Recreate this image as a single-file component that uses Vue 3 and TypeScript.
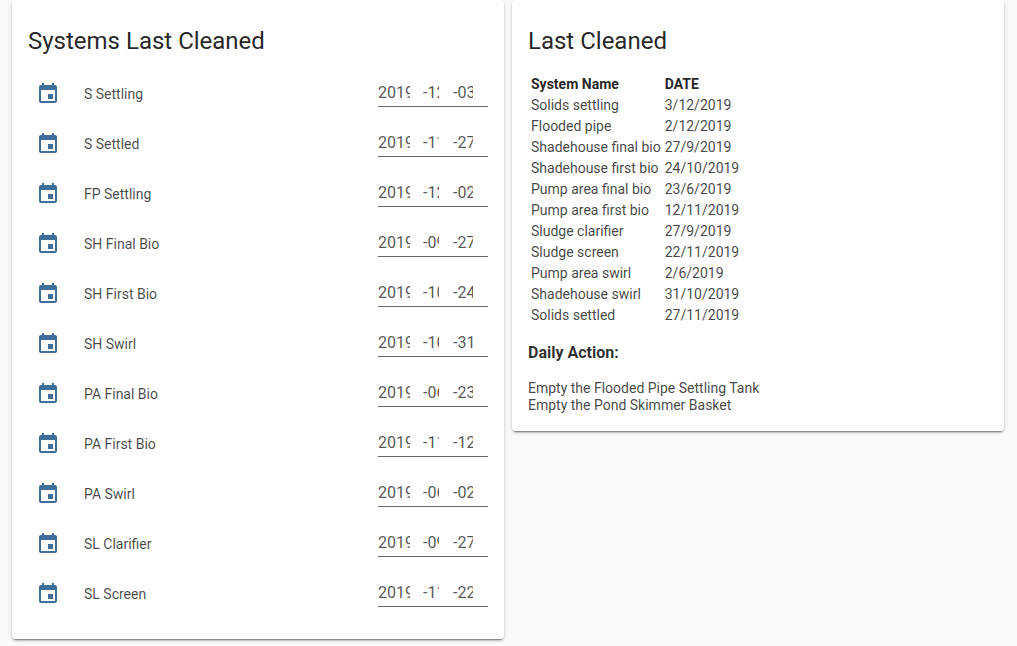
<script setup lang="ts">
const systems = [
  { name: 'S Settling', month: '-12', day: '-03' },
  { name: 'S Settled', month: '-11', day: '-27' },
  { name: 'FP Settling', month: '-12', day: '-02' },
  { name: 'SH Final Bio', month: '-09', day: '-27' },
  { name: 'SH First Bio', month: '-10', day: '-24' },
  { name: 'SH Swirl', month: '-10', day: '-31' },
  { name: 'PA Final Bio', month: '-06', day: '-23' },
  { name: 'PA First Bio', month: '-11', day: '-12' },
  { name: 'PA Swirl', month: '-06', day: '-02' },
  { name: 'SL Clarifier', month: '-09', day: '-27' },
  { name: 'SL Screen', month: '-11', day: '-22' },
]
const cleaned = [
  ['Solids settling', '3/12/2019'],
  ['Flooded pipe', '2/12/2019'],
  ['Shadehouse final bio', '27/9/2019'],
  ['Shadehouse first bio', '24/10/2019'],
  ['Pump area final bio', '23/6/2019'],
  ['Pump area first bio', '12/11/2019'],
  ['Sludge clarifier', '27/9/2019'],
  ['Sludge screen', '22/11/2019'],
  ['Pump area swirl', '2/6/2019'],
  ['Shadehouse swirl', '31/10/2019'],
  ['Solids settled', '27/11/2019'],
]
</script>

<template>
  <div class="page">
    <section class="card left">
      <h2 class="title">Systems Last Cleaned</h2>
      <div class="rows">
        <div v-for="s in systems" :key="s.name" class="row">
          <svg class="icon" viewBox="0 0 24 24" width="24" height="24">
            <path d="M17 12h-5v5h5v-5zM16 1v2H8V1H6v2H5c-1.11 0-1.99.9-1.99 2L3 19c0 1.1.89 2 2 2h14c1.1 0 2-.9 2-2V5c0-1.1-.9-2-2-2h-1V1h-2zm3 18H5V8h14v11z" />
          </svg>
          <span class="name">{{ s.name }}</span>
          <div class="date">
            <span class="seg year">2019</span>
            <span class="seg month">{{ s.month }}</span>
            <span class="seg day">{{ s.day }}</span>
          </div>
        </div>
      </div>
    </section>
    <section class="card right">
      <h2 class="title">Last Cleaned</h2>
      <table class="table">
        <thead>
          <tr><th>System Name</th><th>DATE</th></tr>
        </thead>
        <tbody>
          <tr v-for="c in cleaned" :key="c[0]">
            <td>{{ c[0] }}</td>
            <td>{{ c[1] }}</td>
          </tr>
        </tbody>
      </table>
      <h3 class="daily">Daily Action:</h3>
      <p class="actions">Empty the Flooded Pipe Settling Tank<br />Empty the Pond Skimmer Basket</p>
    </section>
  </div>
</template>

<style>
html, body { margin: 0; background: #fafafa; }
</style>

<style scoped>
.page {
  display: flex;
  align-items: flex-start;
  gap: 8px;
  padding: 0 13px 7px 12px;
  height: 646px;
  box-sizing: border-box;
  overflow: hidden;
  font-family: Roboto, sans-serif;
  color: rgba(0, 0, 0, 0.87);
}
.card {
  width: 492px;
  box-sizing: border-box;
  background: #fff;
  border-radius: 4px;
  padding: 16px;
  box-shadow: 0 3px 1px -2px rgba(0, 0, 0, 0.32), 0 2px 2px 0 rgba(0, 0, 0, 0.18), 0 1px 5px 0 rgba(0, 0, 0, 0.12);
}
.left { height: 639px; }
.right { height: 431px; }
.title {
  margin: 9px 0 0;
  font-size: 24px;
  font-weight: 400;
  line-height: 32px;
}
.rows { margin-top: 12px; }
.row {
  display: flex;
  align-items: center;
  height: 50px;
  font-size: 14px;
}
.icon {
  fill: #3f6e9a;
  margin-left: 8px;
  flex: none;
}
.name {
  margin-left: 24px;
  color: rgba(0, 0, 0, 0.72);
}
.date {
  margin-left: auto;
  width: 110px;
  height: 26px;
  box-sizing: border-box;
  border-bottom: 1px solid rgba(0, 0, 0, 0.6);
  display: flex;
  font-size: 16px;
  line-height: 24px;
  color: rgba(0, 0, 0, 0.68);
}
.seg {
  display: block;
  overflow: hidden;
  white-space: nowrap;
  flex: none;
}
.year { width: 32px; }
.month { width: 16px; margin-left: 13px; }
.day { width: 20px; margin-left: 14px; }
.table {
  margin-top: 16px;
  border-spacing: 2px;
  font-size: 14px;
  line-height: 19px;
}
.table th {
  text-align: left;
  font-weight: 700;
  padding: 0 1px;
}
.table td { padding: 0 1px; color: rgba(0, 0, 0, 0.74); }
.daily {
  margin: 14px 0 0;
  font-size: 16px;
  font-weight: 700;
  line-height: 24px;
  color: rgba(0, 0, 0, 0.82);
}
.actions {
  margin: 15px 0 0;
  font-size: 14px;
  line-height: 17px;
  color: rgba(0, 0, 0, 0.74);
}
</style>
